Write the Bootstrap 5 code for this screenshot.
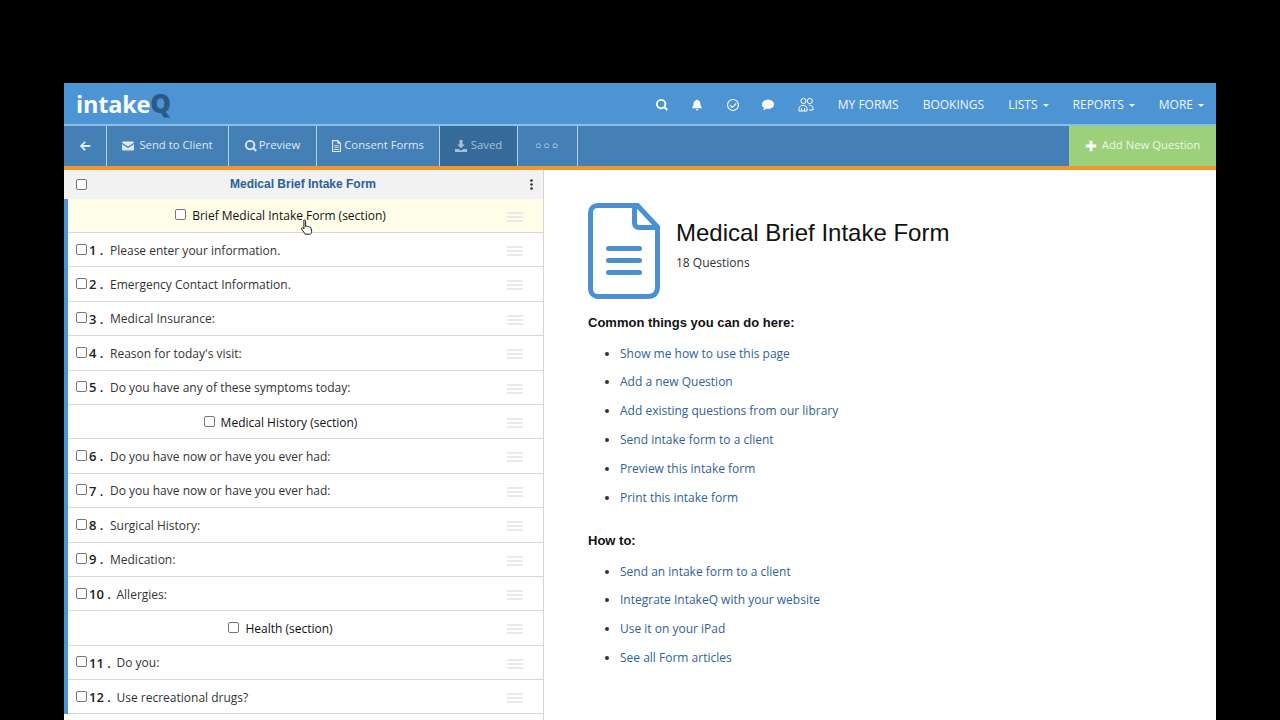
<!DOCTYPE html>
<html lang="en"><head><meta charset="utf-8"><title>IntakeQ</title>
<link href="https://cdn.jsdelivr.net/npm/bootstrap@5.3.0/dist/css/bootstrap.min.css" rel="stylesheet">
<style>
html,body{height:720px;overflow:hidden;background:#000;font-family:"Open Sans",sans-serif;}
.stage{padding:83px 64px 0;height:720px;overflow:hidden}
.app{background:#fff;width:1152px;height:637px;overflow:hidden}
.topbar{height:41px;background:#4d94d5;flex:none}
.logo-a{font-family:"Open Sans",sans-serif;font-weight:700;font-size:23.5px;color:#fff;letter-spacing:-.2px;line-height:41px}
.logo-b{color:#2c5a85;font-weight:800;font-size:26px;letter-spacing:-.5px}
.topnav{font-size:12px;color:#f1f6fb;padding-top:2px;gap:24px}
.icons{gap:23.5px}
.ticon{width:12px;height:12px;fill:#fff;display:block}
.ticon-w{width:16px;height:16px}
.caret-d::after{content:"";display:inline-block;margin-left:5px;vertical-align:2px;border-top:3px solid currentColor;border-left:3px solid transparent;border-right:3px solid transparent}
.toolbar{height:46px;flex:none;background:#447fb5;border-top:2px solid #8fbce3;border-bottom:4.5px solid #f0962e}
.tb{height:39.5px;color:#dfe9f3;font-size:11.3px;border-right:1px solid #b6cfe5;white-space:nowrap}
.tb-back{width:43px}.tb-send{width:122px;gap:5px}.tb-prev{width:88px;gap:2px}.tb-cons{width:123px;gap:3px}.tb-save{width:78px;gap:4px;background:#356a9b;color:#a9bfd4}.tb-more{width:60px;letter-spacing:2px;font-size:10.5px}
.tb svg{fill:currentColor;width:12px;height:12px;flex:none}
.tb .doc-i{width:9px}
.tb-add{width:147px;gap:5px;background:#9dd07a;color:#eef6e8;font-size:11.3px;height:39.5px}
.tb-add svg{width:12px;height:12px;fill:#fff}
.leftp{width:480px;flex:none;border-right:1px solid #d5d5d5}
.lhead{height:28.6px;background:#f2f2f2;padding:0 10px 0 12px}
.lhead b{font-family:"Liberation Sans",sans-serif;font-size:12px;color:#2a6099;margin-right:11px}
.cb{appearance:none;width:11px;height:11px;border:1px solid #767676;border-radius:2px;background:#fff;margin:-3px 0 0;flex:none;display:block}
.lhead .cb{margin-top:0}
.dots{width:3px;height:11px;display:block;fill:#333}
.qrows{border-left:4px solid #4d94d5}
.qrow{height:34.4px;border-bottom:1px solid #d9d9d9;padding:2px 20px 0 8px;font-size:12px;color:#333;position:relative}
.qnum{color:#222;font-weight:600;font-size:13px;margin-left:2px;width:21px;flex:none;white-space:nowrap}
.qnum-w{width:27.500px}
.sect{color:#111;justify-content:center}
.sect-in{margin-right:38px}
.sect .cb{margin-right:6px}
.hl{background:#fefde8}
.grip{width:16px;position:absolute;right:20px;top:13px}
.grip i{display:block;height:2px;background:#e9e9e9;margin-bottom:2px}
.rightp{padding:32.600px 0 0 44px;color:#333;font-size:12px}
.doc{width:72px;height:96px;flex:none}
.ttl{font-family:"Liberation Sans",sans-serif;font-size:24px;color:#111;font-weight:400;line-height:28px;margin:0 0 7px}
.qcount{font-size:12px;color:#333}
.hd{font-family:"Liberation Sans",sans-serif;font-weight:700;font-size:13px;color:#111;line-height:16px}
.hd-a{margin-top:16px;margin-bottom:14px}
.hd-b{margin-top:27px;margin-bottom:14px}
.lnk{padding-left:32px;margin:0;list-style:disc;line-height:17px}
.lnk li{margin-bottom:11.8px;color:#333}
.lnk a{color:#2f6296;text-decoration:none}
.cursor{position:absolute;left:232px;top:20px;width:14px;height:17px}
</style></head><body>
<div class="stage"><div class="app d-flex flex-column">
 <div class="topbar d-flex align-items-center px-2">
  <div class="logo-a ms-1">intake<span class="logo-b">Q</span></div>
  <div class="topnav d-flex align-items-center ms-auto me-1">
   <div class="icons d-flex align-items-center">
   <svg class="ticon" viewBox="0 0 16 16"><path d="M6.800 0a6.800 6.800 0 1 0 3.900 12.400l3.200 3.200 2-2-3.200-3.200A6.800 6.800 0 0 0 6.800 0zm0 2.400a4.400 4.400 0 1 1 0 8.800 4.400 4.400 0 0 1 0-8.800z"/></svg>
   <svg class="ticon" viewBox="1.500 .5 13 15"><path d="M8 1a1 1 0 0 1 1 1c2.300.5 3.200 2.300 3.200 4.500 0 3 1.800 4.200 1.800 5.500H2c0-1.300 1.800-2.500 1.800-5.500C3.800 4.300 4.700 2.500 7 2a1 1 0 0 1 1-1zM6.300 13.200h3.400a1.700 1.700 0 0 1-3.400 0z"/></svg>
   <svg class="ticon" viewBox="1 1 14 14"><path d="M8 1a7 7 0 1 0 0 14A7 7 0 0 0 8 1zm0 1.300a5.700 5.700 0 1 1 0 11.400A5.700 5.700 0 0 1 8 2.300zM11.300 5.800l-4.100 4.100-2.300-2.300-.9.900 3.200 3.200 5-5z"/></svg>
   <svg class="ticon" viewBox="1 1.500 14 13"><path d="M8 2C4 2 1 4.400 1 7.300c0 1.700 1 3.200 2.600 4.100-.2.900-.7 1.700-1.400 2.400 1.500-.1 2.900-.7 3.900-1.500.6.100 1.200.2 1.900.2 4 0 7-2.300 7-5.200S12 2 8 2z"/></svg>
   <svg class="ticon ticon-w" viewBox="0 0 16 16"><g fill="none" stroke="#fff" stroke-width="1"><circle cx="5.500" cy="4" r="2.600"/><circle cx="11.800" cy="4" r="2.600"/><path d="M1 14v-2.500C1 9.500 3 8.300 5 8.300s4 1.200 4 3.200V14zM11 8.200c2 0 4 1 4 3V13h-4M3.500 11v3M6.500 11v3"/></g></svg>
   </div>
   <span>MY FORMS</span><span>BOOKINGS</span>
   <span class="caret-d">LISTS</span><span class="caret-d">REPORTS</span><span class="caret-d">MORE</span>
  </div>
 </div>
 <div class="toolbar d-flex">
  <div class="tb tb-back d-flex align-items-center justify-content-center"><svg viewBox="0 0 16 16"><path d="M7.500 1.500 1 8l6.500 6.500 1.700-1.700L5.600 9.200H15V6.800H5.600l3.600-3.600z"/></svg></div>
  <div class="tb tb-send d-flex align-items-center justify-content-center"><svg viewBox="0 0 16 16"><path d="M0 3.500C0 2.700.7 2 1.500 2h13c.8 0 1.500.7 1.500 1.500L8 8.500zM0 5.500V13c0 .6.500 1 1 1h14c.6 0 1-.4 1-1V5.500L8 10.500z"/></svg>Send to Client</div>
  <div class="tb tb-prev d-flex align-items-center justify-content-center"><svg viewBox="0 0 16 16"><path d="M6.800 0a6.800 6.800 0 1 0 3.900 12.400l3.200 3.200 2-2-3.200-3.200A6.800 6.800 0 0 0 6.800 0zm0 2.400a4.400 4.400 0 1 1 0 8.800 4.400 4.400 0 0 1 0-8.800z"/></svg>Preview</div>
  <div class="tb tb-cons d-flex align-items-center justify-content-center"><svg class="doc-i" viewBox="0 0 12 16"><path d="M1 0h7l4 4v12H0V0zm.5 1.500v13h9V5H7V1.500zM3 7h6v1.200H3zm0 2.500h6v1.200H3zm0 2.500h6v1.200H3z"/></svg>Consent Forms</div>
  <div class="tb tb-save d-flex align-items-center justify-content-center"><svg viewBox="0 0 16 16"><path d="M6 0h4v6h3l-5 5-5-5h3zM0 12h5l1.500 1.500h3L11 12h5v4H0z"/></svg>Saved</div>
  <div class="tb tb-more d-flex align-items-center justify-content-center">○○○</div>
  <div class="tb-add ms-auto d-flex align-items-center justify-content-center"><svg viewBox="0 0 16 16"><path d="M6 1h4v5h5v4h-5v5H6v-5H1V6h5z"/></svg>Add New Question</div>
 </div>
 <div class="d-flex flex-grow-1" style="min-height:0">
  <div class="leftp">
   <div class="lhead d-flex align-items-center justify-content-between"><input class="cb" type="checkbox" aria-label="all"><b>Medical Brief Intake Form</b><svg class="dots" viewBox="0 0 3 11"><circle cx="1.500" cy="1.500" r="1.300"/><circle cx="1.500" cy="5.500" r="1.300"/><circle cx="1.500" cy="9.500" r="1.300"/></svg></div>
   <div class="qrows position-relative">
    <div class="qrow hl sect d-flex align-items-center"><div class="sect-in d-flex align-items-center"><input class="cb" type="checkbox" aria-label="s">Brief Medical Intake Form (section)</div><span class="grip"><i></i><i></i><i></i></span></div>
    <div class="qrow d-flex align-items-center"><input class="cb" type="checkbox" aria-label="q"><span class="qnum">1 .</span>Please enter your information.<span class="grip"><i></i><i></i><i></i></span></div>
    <div class="qrow d-flex align-items-center"><input class="cb" type="checkbox" aria-label="q"><span class="qnum">2 .</span>Emergency Contact Information.<span class="grip"><i></i><i></i><i></i></span></div>
    <div class="qrow d-flex align-items-center"><input class="cb" type="checkbox" aria-label="q"><span class="qnum">3 .</span>Medical Insurance:<span class="grip"><i></i><i></i><i></i></span></div>
    <div class="qrow d-flex align-items-center"><input class="cb" type="checkbox" aria-label="q"><span class="qnum">4 .</span>Reason for today's visit:<span class="grip"><i></i><i></i><i></i></span></div>
    <div class="qrow d-flex align-items-center"><input class="cb" type="checkbox" aria-label="q"><span class="qnum">5 .</span>Do you have any of these symptoms today:<span class="grip"><i></i><i></i><i></i></span></div>
    <div class="qrow sect d-flex align-items-center"><div class="sect-in d-flex align-items-center"><input class="cb" type="checkbox" aria-label="s">Medical History (section)</div><span class="grip"><i></i><i></i><i></i></span></div>
    <div class="qrow d-flex align-items-center"><input class="cb" type="checkbox" aria-label="q"><span class="qnum">6 .</span>Do you have now or have you ever had:<span class="grip"><i></i><i></i><i></i></span></div>
    <div class="qrow d-flex align-items-center"><input class="cb" type="checkbox" aria-label="q"><span class="qnum">7 .</span>Do you have now or have you ever had:<span class="grip"><i></i><i></i><i></i></span></div>
    <div class="qrow d-flex align-items-center"><input class="cb" type="checkbox" aria-label="q"><span class="qnum">8 .</span>Surgical History:<span class="grip"><i></i><i></i><i></i></span></div>
    <div class="qrow d-flex align-items-center"><input class="cb" type="checkbox" aria-label="q"><span class="qnum">9 .</span>Medication:<span class="grip"><i></i><i></i><i></i></span></div>
    <div class="qrow d-flex align-items-center"><input class="cb" type="checkbox" aria-label="q"><span class="qnum qnum-w">10 .</span>Allergies:<span class="grip"><i></i><i></i><i></i></span></div>
    <div class="qrow sect d-flex align-items-center"><div class="sect-in d-flex align-items-center"><input class="cb" type="checkbox" aria-label="s">Health (section)</div><span class="grip"><i></i><i></i><i></i></span></div>
    <div class="qrow d-flex align-items-center"><input class="cb" type="checkbox" aria-label="q"><span class="qnum qnum-w">11 .</span>Do you:<span class="grip"><i></i><i></i><i></i></span></div>
    <div class="qrow d-flex align-items-center"><input class="cb" type="checkbox" aria-label="q"><span class="qnum qnum-w">12 .</span>Use recreational drugs?<span class="grip"><i></i><i></i><i></i></span></div>
    <svg class="cursor" viewBox="0 0 13 16"><path d="M4 1c.8 0 1.200.5 1.200 1.200V7l1-.2c.6-.1 1 .2 1.200.5.500-.3 1.100-.2 1.400.3.600-.2 1.200.1 1.300.7l.7 3c.2 1-.2 2-1 3H4.800L1.500 9.500c-.5-.8.500-1.700 1.300-1l.8.800V2.200C3 1.500 3.300 1 4 1z" fill="#fff" stroke="#111" stroke-width=".9"/></svg>
   </div>
  </div>
  <div class="rightp flex-grow-1">
   <div class="d-flex gap-3">
    <svg class="doc" viewBox="0 0 72 96"><path d="M10 2.500h39.500L69.500 24v60c0 5-3 9.500-9 9.500H10c-4.500 0-7.500-3.500-7.500-8V10C2.500 5.500 5.500 2.500 10 2.500z" fill="#fff" stroke="#4a90d2" stroke-width="5"/><path d="M46.500 3v17c0 3 2 4.500 4.500 4.500h18" fill="none" stroke="#4a90d2" stroke-width="5"/><rect x="18" y="43" width="36" height="5" rx="2.500" fill="#4a90d2"/><rect x="18" y="55" width="36" height="5" rx="2.500" fill="#4a90d2"/><rect x="18" y="67" width="36" height="5" rx="2.500" fill="#4a90d2"/></svg>
    <div class="pt-3"><h1 class="ttl">Medical Brief Intake Form</h1><div class="qcount">18 Questions</div></div>
   </div>
   <div class="hd hd-a">Common things you can do here:</div>
   <ul class="lnk"><li><a href="#">Show me how to use this page</a></li><li><a href="#">Add a new Question</a></li><li><a href="#">Add existing questions from our library</a></li><li><a href="#">Send intake form to a client</a></li><li><a href="#">Preview this intake form</a></li><li><a href="#">Print this intake form</a></li></ul>
   <div class="hd hd-b">How to:</div>
   <ul class="lnk"><li><a href="#">Send an intake form to a client</a></li><li><a href="#">Integrate IntakeQ with your website</a></li><li><a href="#">Use it on your iPad</a></li><li><a href="#">See all Form articles</a></li></ul>
  </div>
 </div>
</div></div>
<script src="https://cdn.jsdelivr.net/npm/bootstrap@5.3.0/dist/js/bootstrap.bundle.min.js"></script>
</body></html>
